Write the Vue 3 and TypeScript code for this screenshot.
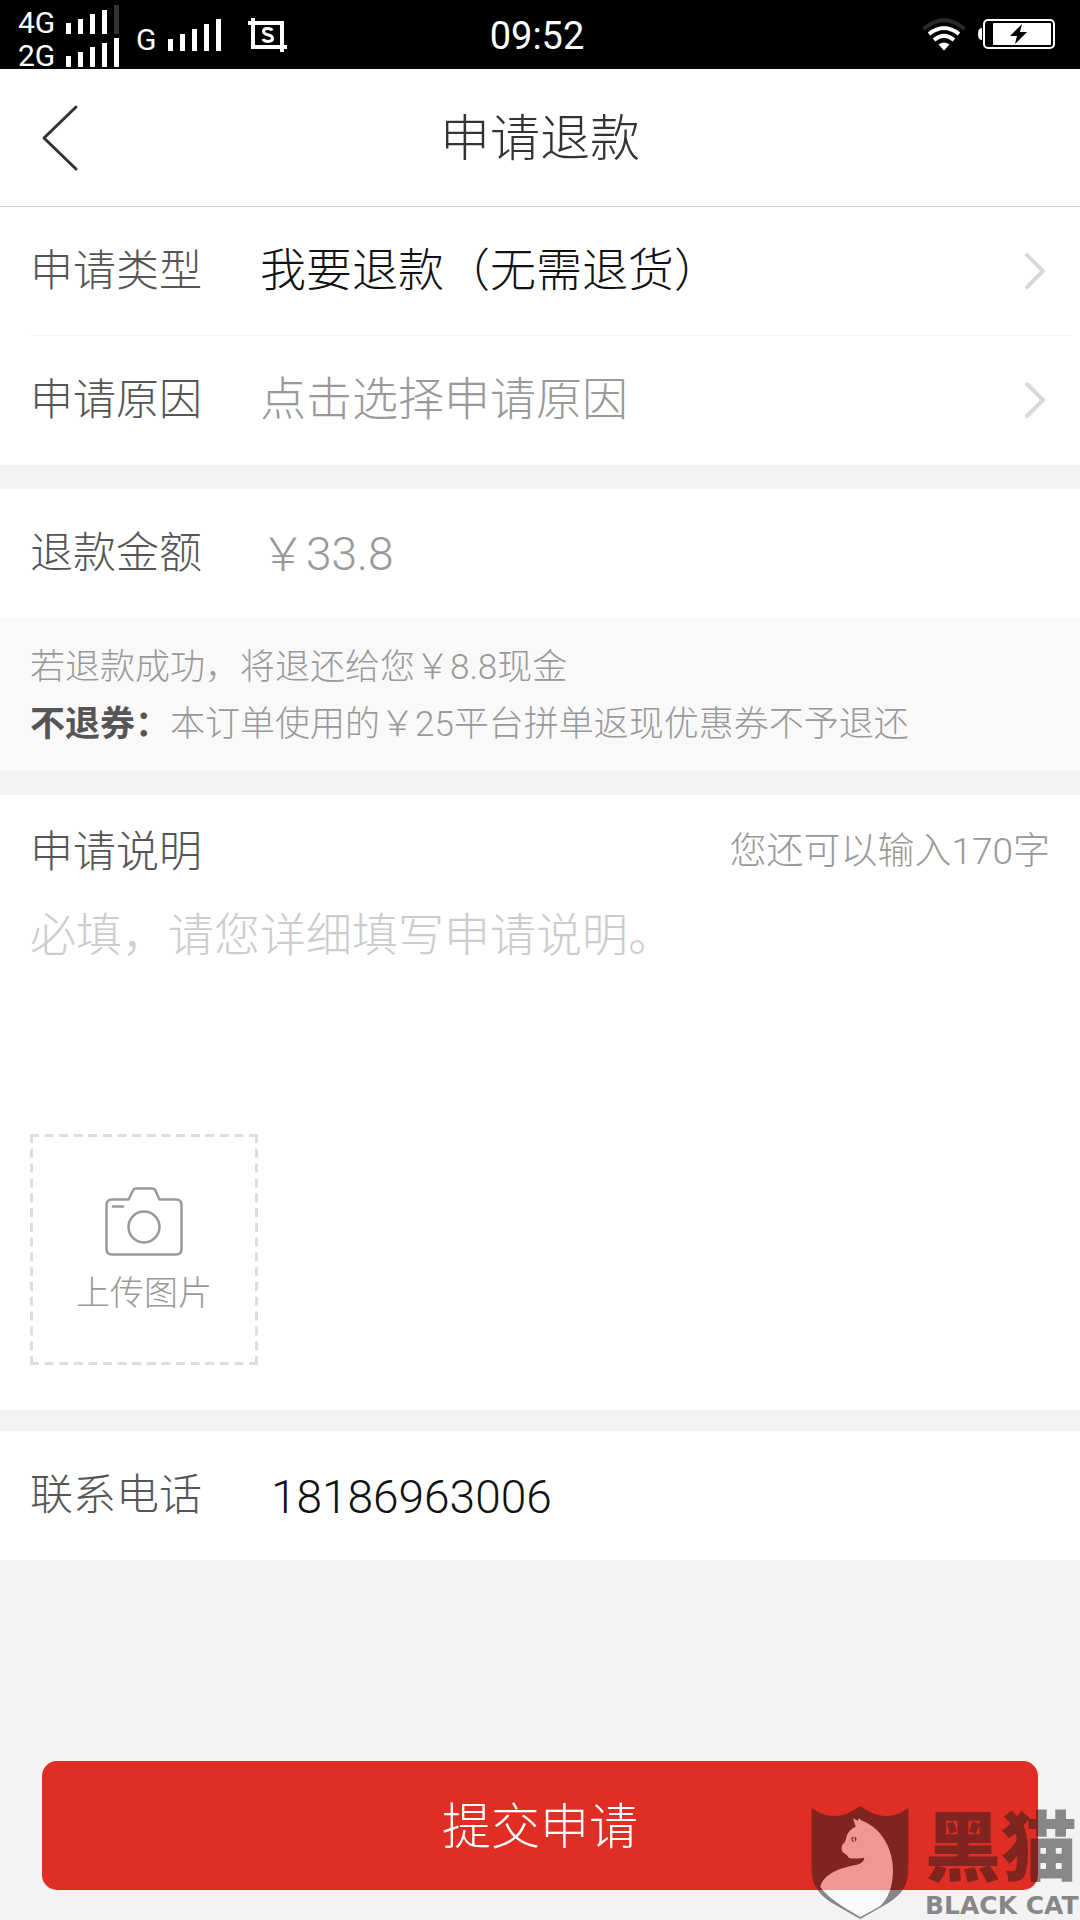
<script setup lang="ts">
import { computed, ref } from 'vue'

interface SignalBar {
  x: number
  height: number
  dim?: boolean
}

const typeOptions = ['我要退款（无需退货）']
const reasonPrompt = '点击选择申请原因'

const applyType = ref(typeOptions[0])
const reason = ref('')
const description = ref('')
const phone = ref('18186963006')
const limit = 170
const remaining = computed(() => limit - description.value.length)

const topBars: SignalBar[] = [
  { x: 0, height: 11 },
  { x: 12, height: 15 },
  { x: 24, height: 20 },
  { x: 36, height: 24 },
  { x: 48, height: 29, dim: true },
]
const lowBars: SignalBar[] = topBars.map(({ x, height }) => ({ x, height }))
const sideBars: SignalBar[] = [12, 17, 22, 27, 32].map((height, i) => ({ x: i * 12, height }))
</script>

<template>
  <div class="page">
    <div class="status">
      <div class="status-side status-left">
        <div class="dual">
          <div class="dual-line">
            <span class="net">4G</span>
            <svg width="53" height="29" viewBox="0 0 53 29" aria-hidden="true">
              <rect v-for="b in topBars" :key="b.x" :x="b.x" :y="29 - b.height" width="5" :height="b.height" :fill="b.dim ? '#333' : '#fff'" />
            </svg>
          </div>
          <div class="dual-line">
            <span class="net">2G</span>
            <svg width="53" height="29" viewBox="0 0 53 29" aria-hidden="true">
              <rect v-for="b in lowBars" :key="b.x" :x="b.x" :y="29 - b.height" width="5" :height="b.height" fill="#fff" />
            </svg>
          </div>
        </div>
        <div class="single">
          <span class="net">G</span>
          <svg width="53" height="32" viewBox="0 0 53 32" aria-hidden="true">
            <rect v-for="b in sideBars" :key="b.x" :x="b.x" :y="32 - b.height" width="5" :height="b.height" fill="#fff" />
          </svg>
        </div>
        <svg class="shot" width="40" height="34" viewBox="0 0 40 34" fill="none" stroke="#fff" stroke-width="4" aria-hidden="true">
          <path d="M0 5H34V34M5 0V29H39" />
          <path d="M24 12.500C23 10 15.500 9.500 15.500 13.500C15.500 18 24.500 15.500 24.500 20.500C24.500 24.500 16 24 15 21" stroke-width="3" />
        </svg>
      </div>
      <time class="clock">09:52</time>
      <div class="status-side status-right">
        <svg width="44" height="33" viewBox="0 0 44 33" fill="none" stroke-width="4" aria-hidden="true">
          <path d="M1.500 11Q22-6.500 42.500 11" stroke="#2b2b2b" />
          <path d="M7 16Q22 4 37 16M12 22Q22 13.500 32 22" stroke="#fff" />
          <path d="M16.500 26.500Q22 22.500 27.500 26.500L22 32.500Z" fill="#fff" />
        </svg>
        <svg width="78" height="31" viewBox="0 0 78 31" aria-hidden="true">
          <path d="M4 9Q0 9 0 15Q0 21 4 21Z" fill="#fff" />
          <rect x="6" y="1" width="70" height="28" rx="4" fill="none" stroke="#fff" stroke-width="2" />
          <rect x="15" y="4" width="58" height="22" rx="1" fill="#fff" />
          <path d="M44 5L32 17H39L37 25L49 13H42Z" fill="#000" />
        </svg>
      </div>
    </div>

    <header class="header">
      <button class="back" type="button" aria-label="返回">
        <svg width="38" height="68" viewBox="0 0 38 68" fill="none" stroke="#333" stroke-width="3" stroke-linecap="round" stroke-linejoin="round" aria-hidden="true">
          <path d="M35 3L3 34L35 65" />
        </svg>
      </button>
      <h1 class="title">申请退款</h1>
    </header>

    <main>
      <section class="card">
        <div class="row">
          <label class="label" for="apply-type">申请类型</label>
          <select id="apply-type" v-model="applyType" class="field">
            <option v-for="t in typeOptions" :key="t" :value="t">{{ t }}</option>
          </select>
          <svg class="chevron" width="22" height="38" viewBox="0 0 22 38" aria-hidden="true"><path d="M3 3L19 19L3 35" /></svg>
        </div>
        <div class="divider"></div>
        <div class="row">
          <label class="label" for="apply-reason">申请原因</label>
          <select id="apply-reason" v-model="reason" class="field muted">
            <option value="">{{ reasonPrompt }}</option>
          </select>
          <svg class="chevron" width="22" height="38" viewBox="0 0 22 38" aria-hidden="true"><path d="M3 3L19 19L3 35" /></svg>
        </div>
      </section>

      <section class="card">
        <div class="row">
          <span class="label">退款金额</span>
          <span class="amount muted">￥33.8</span>
        </div>
        <div class="notice">
          <p>若退款成功，将退还给您￥8.8现金</p>
          <p><strong>不退券：</strong>本订单使用的￥25平台拼单返现优惠券不予退还</p>
        </div>
      </section>

      <section class="card explain">
        <div class="explain-head">
          <label class="label" for="description">申请说明</label>
          <span class="counter">您还可以输入{{ remaining }}字</span>
        </div>
        <textarea id="description" v-model="description" class="description" :maxlength="limit" placeholder="必填，请您详细填写申请说明。"></textarea>
        <button class="upload" type="button">
          <svg class="dashes" width="228" height="231" viewBox="0 0 228 231" stroke="#ddd" stroke-width="3" aria-hidden="true">
            <path d="M0 1.500H228M0 229.500H228" stroke-dasharray="9 5.600" />
            <path d="M1.500 0V231M226.500 0V231" stroke-dasharray="9 5.800" />
          </svg>
          <svg width="78" height="70" viewBox="0 0 78 70" fill="none" stroke="#999" stroke-width="2.500" stroke-linecap="round" stroke-linejoin="round" aria-hidden="true">
            <path d="M7 12.500H23.500L28 3.500Q28.600 1.500 31 1.500H47Q49.500 1.500 50.300 3.500L54.500 12.500H71Q76.500 12.500 76.500 18V62Q76.500 67.500 71 67.500H7Q1.500 67.500 1.500 62V18Q1.500 12.500 7 12.500Z" />
            <path d="M8 19.500H18" />
            <circle cx="39" cy="40" r="15.500" />
          </svg>
          <span>上传图片</span>
        </button>
      </section>

      <section class="card">
        <div class="row">
          <label class="label" for="phone">联系电话</label>
          <input id="phone" v-model="phone" class="field phone" type="tel" />
        </div>
      </section>
    </main>

    <footer class="footer">
      <button class="submit" type="button">提交申请</button>
    </footer>

    <div class="mark">
      <svg width="98" height="115" viewBox="92 194 294 345" aria-hidden="true">
        <path d="M94 203Q165 255 240 196Q315 255 384 203V385C384 470 325 485 240 536C155 485 94 470 94 385Z" fill="#201c1c" />
        <path d="M120 440C128 400 180 382 230 373Q252 366 252 352Q225 357 206 353L199 344L187 335Q181 325 186 313Q197 305 199 286Q207 267 226 259L218 234L232 241L236 234L242 240C300 260 338 322 338 390C338 445 320 478 300 497Q270 514 240 530C180 496 142 470 120 440Z" fill="#fff" />
        <path d="M213 294Q216 288 221 291L216 297L222 305Q214 306 213 294ZM223 289Q233 293 225 304Z" fill="#201c1c" />
      </svg>
      <div class="mark-text">
        <span class="mark-name">黑猫</span>
        <span class="mark-latin">BLACK CAT</span>
      </div>
    </div>
  </div>
</template>

<style>
body {
  margin: 0;
  background: #f3f3f3;
}
</style>

<style scoped>
.page {
  position: relative;
  display: flex;
  flex-direction: column;
  min-height: 100vh;
  overflow: hidden;
  background: #f3f3f3;
  color: #111;
  font-family: Roboto, "Noto Sans CJK SC", sans-serif;
  font-weight: 300;
}
.page * {
  box-sizing: border-box;
}
svg {
  display: block;
  flex: none;
}
button,
input,
select,
textarea {
  margin: 0;
  padding: 0;
  border: 0;
  border-radius: 0;
  outline: 0;
  background: none;
  font: inherit;
  color: inherit;
}
h1,
p {
  margin: 0;
  font-weight: inherit;
}

.status {
  display: flex;
  align-items: center;
  height: 69px;
  background: #000;
  color: #fff;
  font-weight: 400;
}
.status-side {
  display: flex;
  flex: 1;
  align-items: center;
}
.status-left {
  padding-left: 18px;
}
.status-right {
  justify-content: flex-end;
  gap: 12px;
  padding-right: 24px;
}
.dual {
  display: flex;
  flex-direction: column;
  gap: 4px;
  padding-top: 2px;
}
.dual-line,
.single {
  display: flex;
  align-items: flex-end;
}
.dual-line {
  gap: 10px;
}
.dual-line .net {
  width: 38px;
}
.single {
  gap: 12px;
  margin-left: 17px;
}
.net {
  font-size: 30px;
  line-height: 22px;
}
.shot {
  margin-left: 27px;
}
.clock {
  padding-top: 2px;
  font-size: 38px;
  line-height: 48px;
}

.header {
  display: grid;
  grid-template-columns: 120px 1fr 120px;
  align-items: center;
  height: 138px;
  border-bottom: 1px solid #ccc;
  background: #fff;
}
.back {
  padding-left: 41px;
}
.title {
  padding-top: 3px;
  color: #333;
  font-size: 50px;
  line-height: 72px;
  text-align: center;
}

.card {
  margin-bottom: 24px;
  background: #fff;
}
.row {
  display: flex;
  align-items: center;
  height: 129px;
  padding: 0 34px 2px 30px;
}
.divider {
  height: 1px;
  margin: -1px 9px 0 30px;
  background: #f3f3f3;
}
.label {
  flex: none;
  width: 230px;
  color: #555;
  font-size: 43px;
  line-height: 60px;
}
.field {
  flex: 1;
  min-width: 0;
  height: 66px;
  padding-bottom: 2px;
  appearance: none;
  font-size: 46px;
  line-height: 64px;
}
.amount {
  padding-top: 2px;
  font-size: 46px;
  line-height: 66px;
}
.phone {
  padding: 4px 0 0 11px;
}
.muted {
  color: #999;
}
.chevron {
  fill: none;
  stroke: #d9d9d9;
  stroke-width: 4px;
  stroke-linecap: round;
  stroke-linejoin: round;
}

.notice {
  padding: 21px 30px 18px;
  background: #f9f9f9;
  color: #999;
  font-size: 35px;
  line-height: 57px;
}
.notice strong {
  color: #555;
  font-weight: 700;
}

.explain {
  margin-bottom: 21px;
  padding: 27px 30px 45px;
}
.explain-head {
  display: flex;
  align-items: center;
  justify-content: space-between;
}
.counter {
  color: #999;
  font-size: 37px;
  line-height: 60px;
}
.description {
  display: block;
  width: 100%;
  height: 232px;
  margin: 20px 0 0;
  resize: none;
  font-size: 46px;
  line-height: 66px;
}
.description::placeholder {
  color: #ccc;
  opacity: 1;
}
.upload {
  position: relative;
  display: flex;
  flex-direction: column;
  align-items: center;
  justify-content: center;
  gap: 12px;
  width: 228px;
  height: 231px;
  padding-top: 4px;
  color: #999;
  font-size: 34px;
  line-height: 48px;
}
.dashes {
  position: absolute;
  inset: 0;
}

.footer {
  padding: 177px 42px 30px;
}
.submit {
  display: block;
  width: 100%;
  height: 129px;
  padding-bottom: 6px;
  border-radius: 15px;
  background: #e02e24;
  color: #fff;
  font-size: 49px;
}

.mark {
  position: absolute;
  right: 2px;
  bottom: 0;
  display: flex;
  gap: 16px;
  opacity: 0.5;
  color: #201c1c;
  pointer-events: none;
}
.mark-text {
  display: flex;
  flex-direction: column;
  width: 153px;
}
.mark-name {
  font-size: 76px;
  font-weight: 900;
  line-height: 88px;
}
.mark-latin {
  font-family: "DejaVu Sans", sans-serif;
  font-size: 25px;
  font-weight: 700;
  line-height: 26px;
  white-space: nowrap;
}
</style>
